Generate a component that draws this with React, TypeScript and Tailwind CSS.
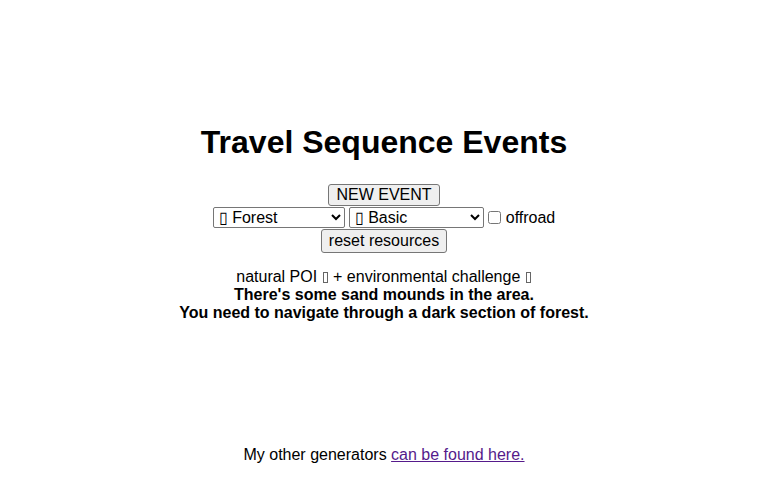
import React, { useState } from "react";

// the emoji in the reference show up as missing-glyph boxes
const Tofu = () => (
  <span className="mx-[1px] inline-block h-[11px] w-[5px] translate-y-[1px] border border-[#666]" />
);
const BOX = "\u25AF";

const lines = [
  "There's some sand mounds in the area.",
  "You need to navigate through a dark section of forest.",
];

const btn =
  "rounded-[3px] border border-[#767676] bg-[#efefef] px-[7px] py-[1px] leading-[18px] text-black hover:bg-[#e5e5e5]";

export default function App() {
  const [biome, setBiome] = useState("forest");
  const [mode, setMode] = useState("basic");
  const [offroad, setOffroad] = useState(false);

  return (
    <div className="flex min-h-[480px] flex-col items-center bg-white font-['Liberation_Sans',Arial,sans-serif] text-[16px] text-black">
      <h1 className="mt-[124px] text-[32px] font-bold leading-[37px]">
        Travel Sequence Events
      </h1>

      <button className={`mt-[23px] ${btn}`}>NEW EVENT</button>

      <div className="flex h-[23px] items-center">
        <select
          value={biome}
          onChange={(e) => setBiome(e.target.value)}
          className="h-[21px] w-[132px] rounded-[2px] border border-[#767676] bg-white pl-[1px] leading-[18px]"
        >
          <option value="forest">{BOX} Forest</option>
          <option value="desert">{BOX} Desert</option>
          <option value="mountain">{BOX} Mountain</option>
        </select>
        <select
          value={mode}
          onChange={(e) => setMode(e.target.value)}
          className="ml-[4px] h-[21px] w-[135px] rounded-[2px] border border-[#767676] bg-white pl-[1px] leading-[18px]"
        >
          <option value="basic">{BOX} Basic</option>
          <option value="mounted">{BOX} Mounted</option>
        </select>
        <label className="flex items-center">
          <input
            type="checkbox"
            checked={offroad}
            onChange={(e) => setOffroad(e.target.checked)}
            className="mr-[5px] ml-[4px] h-[13px] w-[13px]"
          />
          offroad
        </label>
      </div>

      <button className={`py-[2px] ${btn}`}>reset resources</button>

      <div className="mt-[15px] text-center leading-[18px]">
        <p>
          natural POI <Tofu /> + environmental challenge <Tofu />
        </p>
        {lines.map((line) => (
          <p key={line} className="font-bold">
            {line}
          </p>
        ))}
      </div>

      <p className="mt-[124px] leading-[18px]">
        My other generators{" "}
        <a href="#" className="text-[#551a8b] underline">
          can be found here.
        </a>
      </p>
    </div>
  );
}
